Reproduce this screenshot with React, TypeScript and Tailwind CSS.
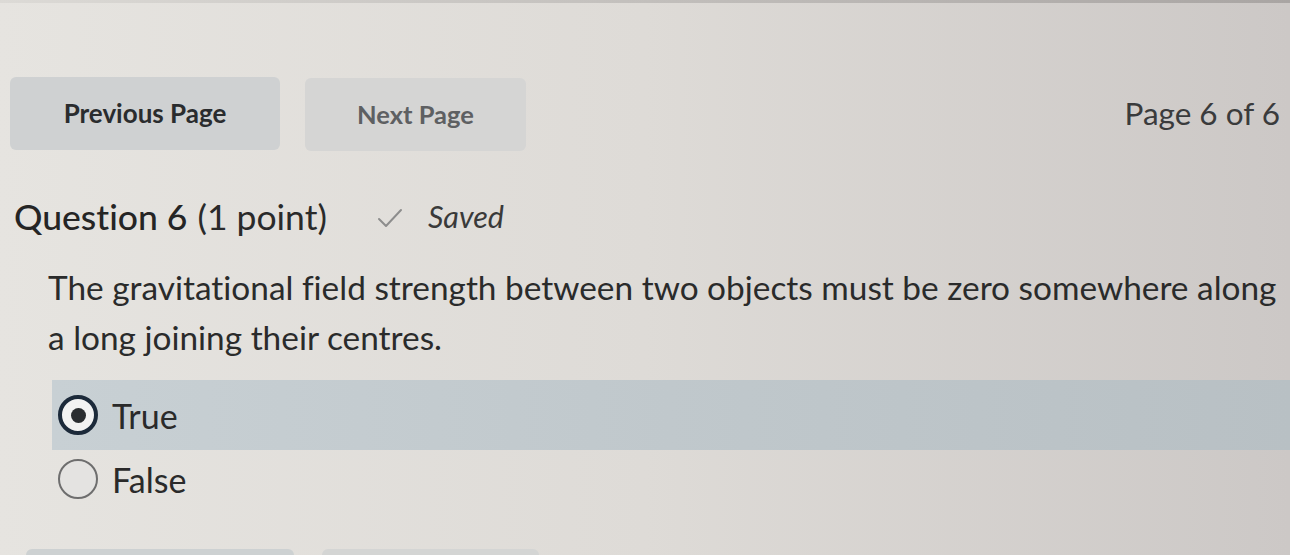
import React from "react";

function CheckMark() {
  return (
    <svg width="28" height="22" viewBox="0 0 28 22" fill="none">
      <path d="M3 12 L10 19 L25 3" stroke="#8d8d8d" strokeWidth="2" strokeLinecap="round" strokeLinejoin="round" />
    </svg>
  );
}

function Radio({ checked }: { checked: boolean }) {
  return checked ? (
    <span className="flex h-[40px] w-[40px] shrink-0 items-center justify-center rounded-full border-[4px] border-[#1c2a3a] bg-[#f2f2f2]">
      <span className="h-[15px] w-[15px] rounded-full bg-[#2a2d30]" />
    </span>
  ) : (
    <span className="h-[40px] w-[40px] shrink-0 rounded-full border-[2px] border-[#6e6e6e] bg-[#e4e3e1]" />
  );
}

export default function App() {
  return (
    <div
      className="relative h-[555px] w-[1290px] overflow-hidden bg-gradient-to-r from-[#e6e4e0] via-[#dedbd7] to-[#ccc8c6] text-[#2c2c2c] [font-variant-ligatures:none]"
      style={{ fontFamily: "Lato, 'Open Sans', sans-serif" }}
    >
      <div className="h-[3px] w-full bg-gradient-to-r from-[#dcdad6] to-[#a9a5a3]" />

      {/* pager */}
      <div className="mt-[72px] flex items-center pl-[10px] pr-[10px]">
        <button className="flex h-[73px] w-[270px] items-center justify-center rounded-[6px] bg-[#cfd1d2] text-[26px] font-bold text-[#2a2c2e]">
          Previous Page
        </button>
        <button className="ml-[25px] mt-[3px] flex h-[73px] w-[221px] items-center justify-center rounded-[6px] bg-[#d5d5d4] text-[25.5px] font-bold text-[#5e6062]">
          Next Page
        </button>
        <div className="ml-auto mt-[2px] text-[31.5px] text-[#3a3b3c]">Page 6 of 6</div>
      </div>

      {/* question header */}
      <div className="mt-[44px] flex h-[43px] items-center pl-[14px] leading-[43px]">
        <span className="text-[35.5px] font-medium text-[#252525]">Question 6</span>
        <span className="ml-[10px] text-[35.5px] text-[#2a2a2a]">(1 point)</span>
        <span className="ml-[49px] mt-[2px]">
          <CheckMark />
        </span>
        <span className="ml-[24px] text-[30.5px] italic text-[#3a3a3a]">Saved</span>
      </div>

      {/* question text */}
      <p className="mt-[24px] pl-[48px] pr-[4px] text-[33.4px] leading-[50px] text-[#2a2b2b]">
        The gravitational field strength between two objects must be zero somewhere along
        <br />a long joining their centres.
      </p>

      {/* answers */}
      <div className="mt-[18px] flex flex-col">
        <label className="ml-[52px] flex h-[70px] items-center bg-gradient-to-r from-[#c8d0d4] to-[#b8c0c4] pl-[6px]">
          <Radio checked />
          <span className="ml-[14px] text-[34px] text-[#2a2a2a]">True</span>
        </label>
        <label className="ml-[52px] mt-[4px] flex h-[50px] items-center pl-[6px]">
          <Radio checked={false} />
          <span className="ml-[14px] text-[34px] text-[#2a2a2a]">False</span>
        </label>
      </div>

      {/* lower pager, cut off */}
      <div className="absolute left-0 top-[549px] flex pl-[26px]">
        <div className="h-[40px] w-[268px] rounded-[6px] bg-[#cdd1d2]" />
        <div className="ml-[28px] h-[40px] w-[217px] rounded-[6px] bg-[#d4d5d4]" />
      </div>
    </div>
  );
}
